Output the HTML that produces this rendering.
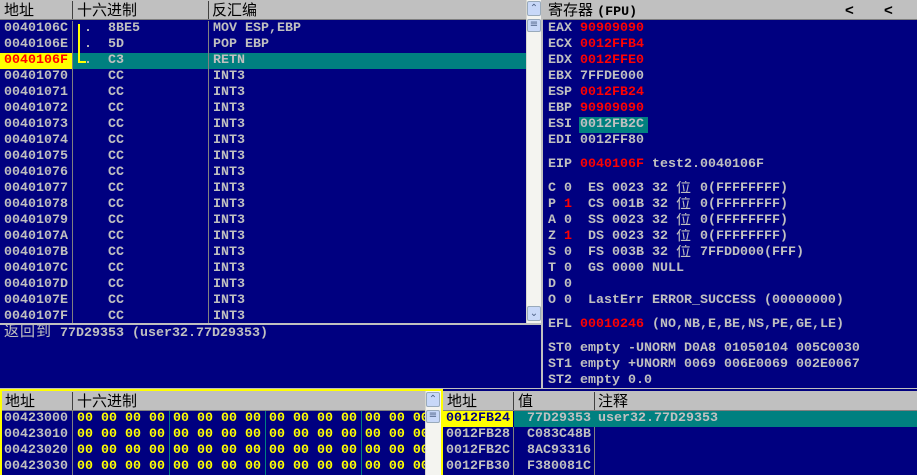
<!DOCTYPE html>
<html><head><meta charset="utf-8"><style>
*{margin:0;padding:0;box-sizing:border-box}
body{width:917px;height:475px;overflow:hidden;background:#000080;position:relative;font-family:"Liberation Mono","Noto Sans CJK SC",monospace}
div{position:absolute}
.t{font-weight:bold;font-size:13.33px;line-height:16px;white-space:pre;color:#c0c0c0}
.r{color:#ff0000}
.h{background:#c0c0c0;height:20px;border-bottom:1px solid #808080}
.hl{font-family:"Liberation Sans","Noto Sans CJK SC",sans-serif;font-size:15px;line-height:19px;color:#000;white-space:pre}
.dv{width:1px;background:#404040;top:1px;height:18px}
.w{display:inline-block;width:16px;height:16px;line-height:16px;vertical-align:top;font-weight:normal;font-size:15px;overflow:hidden}
.sb{background:#f4f4f0;border-left:1px solid #d8d8d0}
.btn{width:14px;height:15px;background:#c8d8f8;border:1px solid #9ab;border-radius:2px;color:#4d6185;font-size:10px;line-height:13px;text-align:center;font-family:"DejaVu Sans",sans-serif}
</style></head><body>
<div class="h" style="left:0;top:0;width:526px"></div>
<div class="hl" style="left:4px;top:1px">地址</div>
<div class="dv" style="left:72px"></div>
<div class="hl" style="left:77px;top:1px">十六进制</div>
<div class="dv" style="left:208px"></div>
<div class="hl" style="left:212px;top:1px">反汇编</div>
<div style="left:0;top:53px;width:72px;height:16px;background:#ffff00"></div>
<div style="left:73px;top:53px;width:453px;height:16px;background:#008080"></div>
<div style="left:72px;top:21px;width:1px;height:303px;background:#808080"></div>
<div style="left:208px;top:21px;width:1px;height:303px;background:#808080"></div>
<div style="left:78px;top:24px;width:2px;height:39px;background:#ffff00"></div>
<div style="left:78px;top:61px;width:8px;height:2px;background:#ffff00"></div>
<div class="t" style="left:4px;top:21px">0040106C
0040106E
<span class="r">0040106F</span>
00401070
00401071
00401072
00401073
00401074
00401075
00401076
00401077
00401078
00401079
0040107A
0040107B
0040107C
0040107D
0040107E
0040107F</div>
<div class="t" style="left:84px;top:21px">.  8BE5
.  5D
.  C3
   CC
   CC
   CC
   CC
   CC
   CC
   CC
   CC
   CC
   CC
   CC
   CC
   CC
   CC
   CC
   CC</div>
<div class="t" style="left:213px;top:21px">MOV ESP,EBP
POP EBP
RETN
INT3
INT3
INT3
INT3
INT3
INT3
INT3
INT3
INT3
INT3
INT3
INT3
INT3
INT3
INT3
INT3</div>
<div class="sb" style="left:526px;top:0;width:15px;height:323px"></div>
<div class="btn" style="left:527px;top:1px">&#x2303;</div>
<div class="btn" style="left:527px;top:19px;height:13px;line-height:10px">≡</div>
<div class="btn" style="left:527px;top:306px">&#x2304;</div>
<div style="left:0;top:323px;width:541px;height:2px;background:#c0c0c0"></div>
<div class="t" style="left:4px;top:325px"><span style="font-weight:normal;font-size:15px;letter-spacing:1px">返回到</span> 77D29353 (user32.77D29353)</div>
<div style="left:541px;top:0;width:2px;height:389px;background:#c0c0c0"></div>
<div class="h" style="left:543px;top:0;width:374px"></div>
<div class="hl" style="left:548px;top:1px">寄存器 <b style="font-family:'Liberation Mono';font-size:13.33px">(FPU)</b></div>
<div class="hl" style="left:845px;top:1px;font-weight:bold">&lt;</div>
<div class="hl" style="left:884px;top:1px;font-weight:bold">&lt;</div>
<div style="left:579px;top:117px;width:69px;height:16px;background:#008080"></div>
<div class="t" style="left:548px;top:21px">EAX <span class="r">90909090</span>
ECX <span class="r">0012FFB4</span>
EDX <span class="r">0012FFE0</span>
EBX 7FFDE000
ESP <span class="r">0012FB24</span>
EBP <span class="r">90909090</span>
ESI 0012FB2C
EDI 0012FF80</div>
<div class="t" style="left:548px;top:157px">EIP <span class="r">0040106F</span> test2.0040106F</div>
<div class="t" style="left:548px;top:181px;height:16px">C 0  ES 0023 32 <span class="w">位</span> 0(FFFFFFFF)</div>
<div class="t" style="left:548px;top:197px;height:16px">P <span class="r">1</span>  CS 001B 32 <span class="w">位</span> 0(FFFFFFFF)</div>
<div class="t" style="left:548px;top:213px;height:16px">A 0  SS 0023 32 <span class="w">位</span> 0(FFFFFFFF)</div>
<div class="t" style="left:548px;top:229px;height:16px">Z <span class="r">1</span>  DS 0023 32 <span class="w">位</span> 0(FFFFFFFF)</div>
<div class="t" style="left:548px;top:245px;height:16px">S 0  FS 003B 32 <span class="w">位</span> 7FFDD000(FFF)</div>
<div class="t" style="left:548px;top:261px">T 0  GS 0000 NULL
D 0
O 0  LastErr ERROR_SUCCESS (00000000)</div>
<div class="t" style="left:548px;top:317px">EFL <span class="r">00010246</span> (NO,NB,E,BE,NS,PE,GE,LE)</div>
<div class="t" style="left:548px;top:341px">ST0 empty -UNORM D0A8 01050104 005C0030
ST1 empty +UNORM 0069 006E0069 002E0067
ST2 empty 0.0</div>
<div style="left:0;top:388px;width:917px;height:1px;background:#c0c0c0"></div>
<div style="left:0;top:389px;width:443px;height:2px;background:#ffff00"></div>
<div style="left:0;top:389px;width:2px;height:86px;background:#ffff00"></div>
<div class="h" style="left:2px;top:391px;width:423px"></div>
<div class="hl" style="left:5px;top:392px">地址</div>
<div class="dv" style="left:72px;top:392px"></div>
<div class="hl" style="left:77px;top:392px">十六进制</div>
<div style="left:72px;top:411px;width:1px;height:64px;background:#808080"></div>
<div style="left:169px;top:411px;width:1px;height:64px;background:#008080"></div>
<div style="left:265px;top:411px;width:1px;height:64px;background:#008080"></div>
<div style="left:361px;top:411px;width:1px;height:64px;background:#008080"></div>
<div class="t" style="left:4px;top:411px">00423000
00423010
00423020
00423030</div>
<div class="t" style="left:77px;top:411px;color:#ffff00;width:348px;overflow:hidden">00 00 00 00 00 00 00 00 00 00 00 00 00 00 00
00 00 00 00 00 00 00 00 00 00 00 00 00 00 00
00 00 00 00 00 00 00 00 00 00 00 00 00 00 00
00 00 00 00 00 00 00 00 00 00 00 00 00 00 00</div>
<div class="sb" style="left:425px;top:391px;width:16px;height:84px"></div>
<div class="btn" style="left:426px;top:392px">&#x2303;</div>
<div class="btn" style="left:426px;top:410px;height:13px;line-height:10px">≡</div>
<div style="left:441px;top:389px;width:2px;height:86px;background:#ffff00"></div>
<div class="h" style="left:443px;top:391px;width:474px"></div>
<div class="hl" style="left:447px;top:392px">地址</div>
<div class="dv" style="left:513px;top:392px"></div>
<div class="hl" style="left:518px;top:392px">值</div>
<div class="dv" style="left:594px;top:392px"></div>
<div class="hl" style="left:598px;top:392px">注释</div>
<div style="left:443px;top:411px;width:70px;height:16px;background:#ffff00"></div>
<div style="left:514px;top:411px;width:403px;height:16px;background:#008080"></div>
<div style="left:513px;top:427px;width:1px;height:48px;background:#808080"></div>
<div style="left:594px;top:427px;width:1px;height:48px;background:#808080"></div>
<div class="t" style="left:446px;top:411px"><span style="color:#000080">0012FB24</span>
0012FB28
0012FB2C
0012FB30</div>
<div class="t" style="left:527px;top:411px">77D29353
C083C48B
8AC93316
F380081C</div>
<div class="t" style="left:598px;top:411px">user32.77D29353</div>
</body></html>
